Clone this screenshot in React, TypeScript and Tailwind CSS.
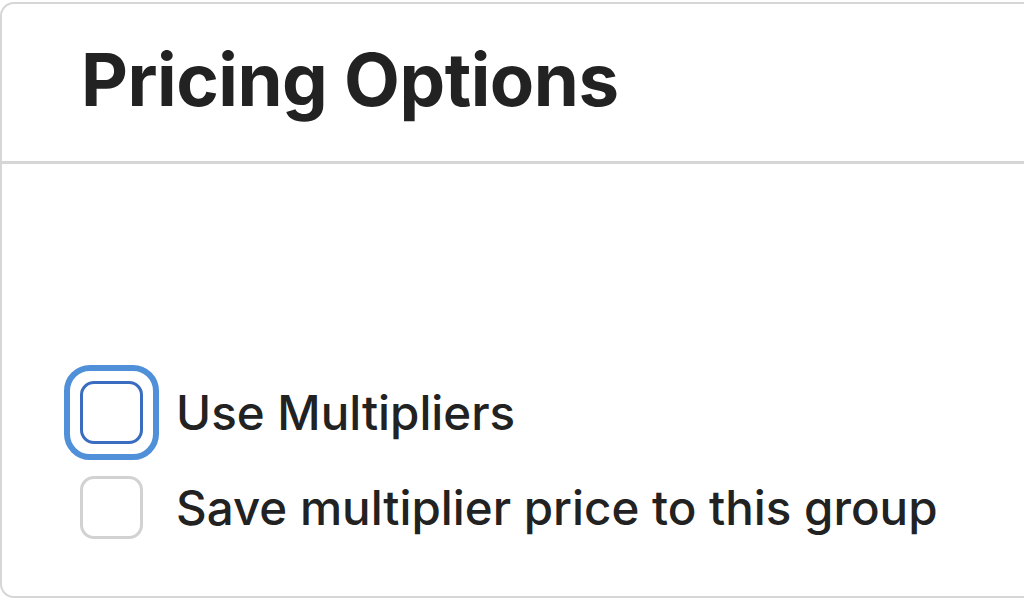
export default function App() {
  return (
    <div
      className="h-[600px] w-[1024px] overflow-hidden bg-white pt-[2px]"
      style={{ fontFamily: "Inter, 'Noto Sans', sans-serif" }}
    >
      <div className="h-[596px] w-[1080px] rounded-[14px] border-2 border-[#d6d6d6] bg-white">
        <div className="flex h-[160px] items-center border-b-[3px] border-[#d6d6d6] pb-[4px] pl-[79px]">
          <h1 className="text-[72.5px] font-bold leading-none tracking-[-0.5px] text-[#222222]">
            Pricing Options
          </h1>
        </div>
        <div className="flex flex-col gap-[32px] pl-[78px] pt-[217px]">
          <label className="flex items-center gap-[33px]">
            <span className="relative h-[63px] w-[63px]">
              <span className="absolute -inset-[16px] rounded-[26px] border-[6px] border-[#4f90d9]" />
              <span className="absolute inset-0 rounded-[14px] border-[3px] border-[#3a6cc0] bg-white" />
            </span>
            <span className="text-[47.5px] font-medium leading-none text-[#222222]">Use Multipliers</span>
          </label>
          <label className="flex items-center gap-[33px]">
            <span className="h-[63px] w-[63px] rounded-[14px] border-[3px] border-[#d2d2d2] bg-white" />
            <span className="text-[47.5px] font-medium leading-none text-[#222222]">
              Save multiplier price to this group
            </span>
          </label>
        </div>
      </div>
    </div>
  );
}
